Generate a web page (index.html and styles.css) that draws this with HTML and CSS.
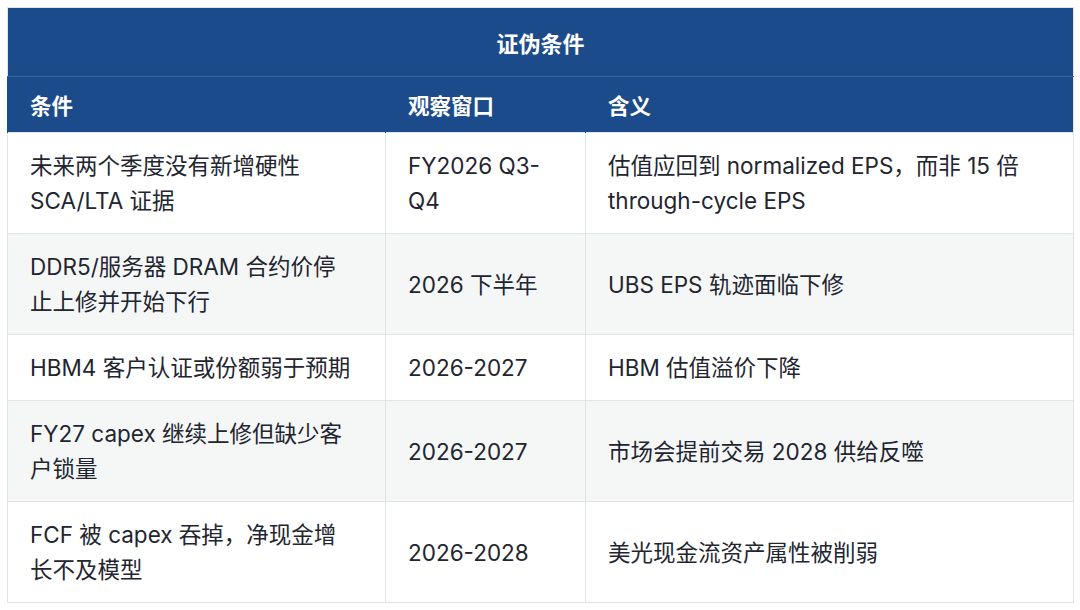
FILE: index.html
```html
<!DOCTYPE html>
<html lang="zh-CN">
<head>
<meta charset="utf-8">
<link rel="stylesheet" href="styles.css">
</head>
<body>
<table class="tbl">
  <colgroup>
    <col class="c1">
    <col class="c2">
    <col class="c3">
  </colgroup>
  <thead>
    <tr class="title-row"><th colspan="3" class="title">证伪条件</th></tr>
    <tr class="head-row"><th>条件</th><th>观察窗口</th><th>含义</th></tr>
  </thead>
  <tbody>
    <tr><td>未来两个季度没有新增硬性 SCA/LTA 证据</td><td>FY2026 Q3-Q4</td><td>估值应回到 normalized EPS，而非 15 倍 through-cycle EPS</td></tr>
    <tr class="alt"><td>DDR5/服务器 DRAM 合约价停止上修并开始下行</td><td>2026 下半年</td><td>UBS EPS 轨迹面临下修</td></tr>
    <tr><td>HBM4 客户认证或份额弱于预期</td><td>2026-2027</td><td>HBM 估值溢价下降</td></tr>
    <tr class="alt"><td>FY27 capex 继续上修但缺少客户锁量</td><td>2026-2027</td><td>市场会提前交易 2028 供给反噬</td></tr>
    <tr><td>FCF 被 capex 吞掉，净现金增长不及模型</td><td>2026-2028</td><td>美光现金流资产属性被削弱</td></tr>
  </tbody>
</table>
</body>
</html>
```
FILE: styles.css
```css
html, body {
  margin: 0;
  padding: 0;
  background: #ffffff;
}
body {
  padding: 7px;
  font-family: "Inter", "Noto Sans CJK SC", sans-serif;
  color: #22252f;
}
.tbl {
  width: 1066px;
  border-collapse: collapse;
  table-layout: fixed;
  border: 1px solid #e1e3e4;
}
.c1 { width: 378px; }
.c2 { width: 200px; }
.c3 { width: 488px; }
th {
  background: #1c4b8b;
  color: #ffffff;
  font-weight: 700;
  font-size: 21.5px;
  text-align: left;
  padding: 0 22px;
  font-family: "Noto Sans CJK SC", sans-serif;
}
.title-row th.title {
  text-align: center;
  height: 68px;
  border-bottom: 1px solid #3a659d;
  font-size: 22px;
}
.head-row th {
  height: 55px;
  border-left: 1px solid #1c4b8b;
}
td {
  font-size: 22.5px;
  line-height: 35px;
  padding: 15px 29px 15px 22px;
  border: 1px solid #e1e3e4;
  vertical-align: middle;
}
tr.alt td {
  background: #f5f7f7;
}
```
